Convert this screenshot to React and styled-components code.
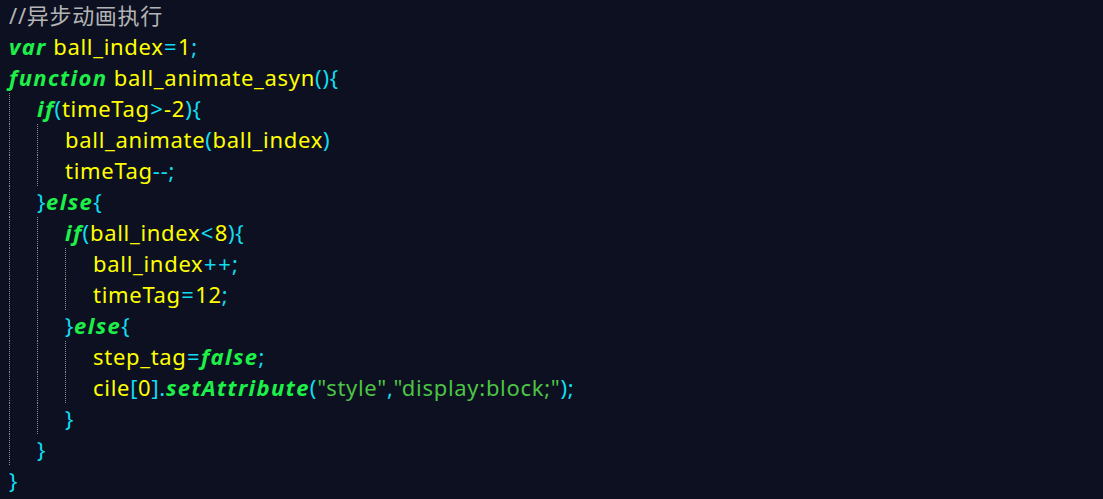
import React from "react";
import styled, { createGlobalStyle } from "styled-components";

const Global = createGlobalStyle`
  html, body { margin: 0; padding: 0; background: #0c1021; }
  body { overflow: hidden; }
`;

const Editor = styled.div`
  width: 1103px;
  height: 499px;
  background: #0c1021;
  padding-left: 9px;
  box-sizing: border-box;
  display: flex;
  flex-direction: column;
  font-family: "Noto Sans", "Noto Sans CJK SC", sans-serif;
  font-size: 22px;
  letter-spacing: 0.7px;
  color: #ffff00;
`;

const Line = styled.div`
  height: 31px;
  line-height: 31px;
  display: flex;
  align-items: stretch;
  white-space: pre;
`;

const Guide = styled.span`
  width: 28px;
  flex: none;
  box-sizing: border-box;
  border-left: ${(p) => (p.$show ? "1px dotted #8a8a8a" : "none")};
`;

const Code = styled.span`
  display: block;
`;

const Comment = styled.span`
  color: #b4b4b4;
`;
const Kw = styled.span`
  color: #1ef04a;
  font-weight: 700;
  font-style: italic;
  letter-spacing: 1.4px;
`;
const P = styled.span`
  color: #12dcf0;
`;
const Op = styled.span`
  color: #12dcf0;
  padding: 0 0.5px;
`;
const Str = styled.span`
  color: #4cc444;
`;

const lines = [
  { g: [], c: <Comment>//异步动画执行</Comment> },
  { g: [], c: <><Kw>var</Kw> ball_index<Op>=</Op>1<P>;</P></> },
  { g: [], c: <><Kw>function</Kw> ball_animate_asyn<P>(){"{"}</P></> },
  { g: [1], c: <><Kw>if</Kw><P>(</P>timeTag<Op>&gt;</Op>-2<P>){"{"}</P></> },
  { g: [1, 1], c: <>ball_animate<P>(</P>ball_index<P>)</P></> },
  { g: [1, 1], c: <>timeTag<P>--;</P></> },
  { g: [1], c: <><P>{"}"}</P><Kw>else</Kw><P>{"{"}</P></> },
  { g: [1, 1], c: <><Kw>if</Kw><P>(</P>ball_index<Op>&lt;</Op>8<P>){"{"}</P></> },
  { g: [1, 1, 1], c: <>ball_index<Op>+</Op><Op>+</Op><P>;</P></> },
  { g: [1, 1, 1], c: <>timeTag<Op>=</Op>12<P>;</P></> },
  { g: [1, 1], c: <><P>{"}"}</P><Kw>else</Kw><P>{"{"}</P></> },
  { g: [1, 1, 1], c: <>step_tag<Op>=</Op><Kw>false</Kw><P>;</P></> },
  { g: [1, 1, 1], c: <>cile<P>[</P>0<P>].</P><Kw>setAttribute</Kw><P>(</P><Str>"style"</Str><P>,</P><Str>"display:block;"</Str><P>);</P></> },
  { g: [1, 1], c: <P>{"}"}</P> },
  { g: [1], c: <P>{"}"}</P> },
  { g: [], c: <P>{"}"}</P> },
];

export default function App() {
  return (
    <>
      <Global />
      <Editor>
        {lines.map((l, k) => (
          <Line key={k}>
            {l.g.map((s, j) => (
              <Guide key={j} $show={!!s} />
            ))}
            <Code>{l.c}</Code>
          </Line>
        ))}
      </Editor>
    </>
  );
}
